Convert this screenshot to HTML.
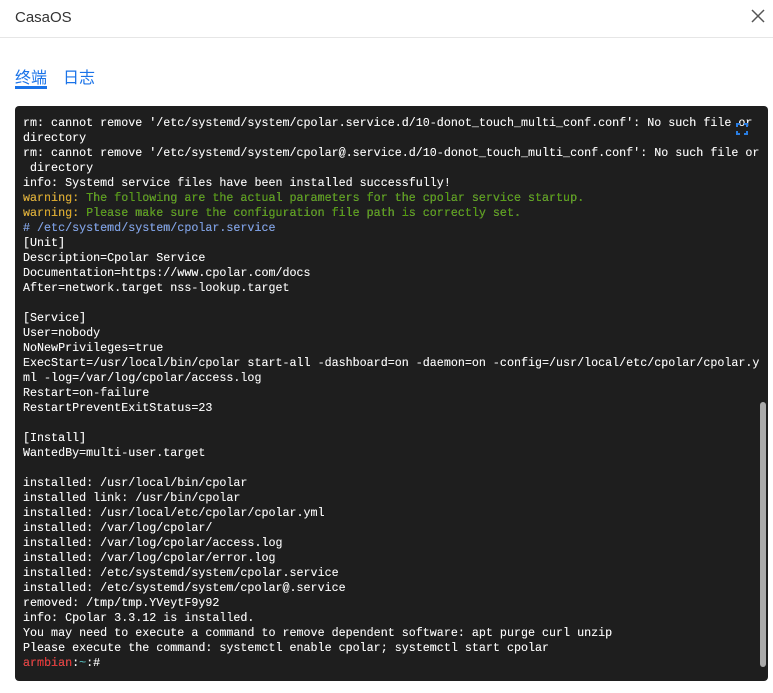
<!DOCTYPE html>
<html><head><meta charset="utf-8"><style>
*{margin:0;padding:0;box-sizing:border-box}
body{width:773px;height:693px;background:#fff;font-family:"Liberation Sans","Noto Sans CJK SC",sans-serif;position:relative;overflow:hidden}
.hdr{position:absolute;left:0;top:0;width:773px;height:38px;border-bottom:1px solid #e6e6e6}
.title{position:absolute;left:15px;top:9px;font-size:15px;color:#333}
.close{position:absolute;left:750px;top:8px}
.tab{position:absolute;top:64px;font-size:16px;color:#1a73e8}
.ul{position:absolute;left:15px;top:86px;width:32px;height:3px;background:#1a73e8}
.term{position:absolute;left:15px;top:106px;width:753px;height:575px;background:#1e1e1e;border-radius:4px;overflow:hidden}
pre{position:absolute;left:8px;top:9.5px;font-family:"Liberation Mono",monospace;font-size:11.7px;line-height:15px;color:#f4f4f4;white-space:pre;text-shadow:0 0 0.3px #fff}
.w{color:#d7a21c}.g{color:#4e9a06}.b{color:#6f95e0}.r{color:#e02828}.c{color:#3aa6a6}
.sb{position:absolute;left:745px;top:296px;width:6px;height:265px;background:#aaa;border-radius:3px}
.ic{position:absolute;left:721px;top:17px;width:12px;height:12px}
</style></head><body>
<div class="hdr"><div class="title">CasaOS</div>
<svg class="close" width="16" height="16" viewBox="0 0 16 16"><path d="M2 2L14 14M14 2L2 14" stroke="#555" stroke-width="1.5"/></svg></div>
<div class="tab" style="left:15px">终端</div><div class="tab" style="left:63px">日志</div>
<div class="ul"></div>
<div class="term"><pre>rm: cannot remove '/etc/systemd/system/cpolar.service.d/10-donot_touch_multi_conf.conf': No such file or
directory
rm: cannot remove '/etc/systemd/system/cpolar@.service.d/10-donot_touch_multi_conf.conf': No such file or
 directory
info: Systemd service files have been installed successfully!
<span class="w">warning:</span> <span class="g">The following are the actual parameters for the cpolar service startup.</span>
<span class="w">warning:</span> <span class="g">Please make sure the configuration file path is correctly set.</span>
<span class="b"># /etc/systemd/system/cpolar.service</span>
[Unit]
Description=Cpolar Service
Documentation=https://www.cpolar.com/docs
After=network.target nss-lookup.target

[Service]
User=nobody
NoNewPrivileges=true
ExecStart=/usr/local/bin/cpolar start-all -dashboard=on -daemon=on -config=/usr/local/etc/cpolar/cpolar.y
ml -log=/var/log/cpolar/access.log
Restart=on-failure
RestartPreventExitStatus=23

[Install]
WantedBy=multi-user.target

installed: /usr/local/bin/cpolar
installed link: /usr/bin/cpolar
installed: /usr/local/etc/cpolar/cpolar.yml
installed: /var/log/cpolar/
installed: /var/log/cpolar/access.log
installed: /var/log/cpolar/error.log
installed: /etc/systemd/system/cpolar.service
installed: /etc/systemd/system/cpolar@.service
removed: /tmp/tmp.YVeytF9y92
info: Cpolar 3.3.12 is installed.
You may need to execute a command to remove dependent software: apt purge curl unzip
Please execute the command: systemctl enable cpolar; systemctl start cpolar
<span class="r">armbian</span>:<span class="c">~</span>:#</pre>
<svg class="ic" viewBox="0 0 12 12"><path d="M1 4V1H4M8 1H11V4M11 8V11H8M4 11H1V8" stroke="#2a7de1" stroke-width="2" fill="none"/></svg>
<div class="sb"></div>
</div>
</body></html>
